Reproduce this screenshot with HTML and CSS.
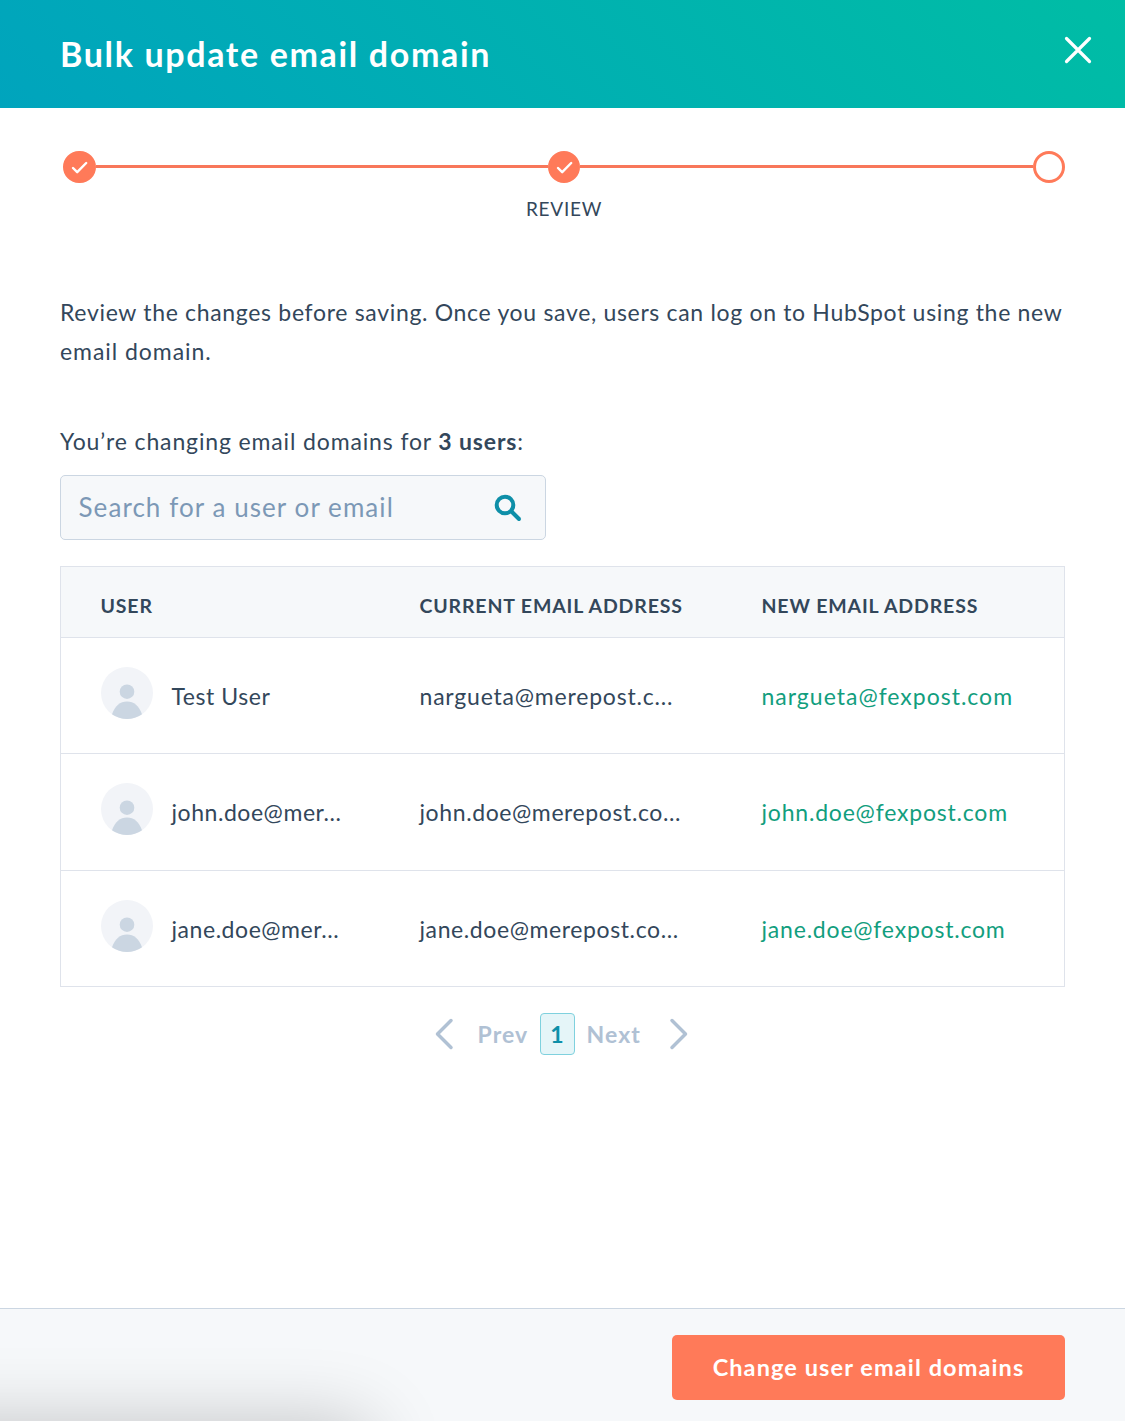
FILE: index.html
```html
<!DOCTYPE html>
<html lang="en">
<head>
  <meta charset="UTF-8" />
  <meta name="viewport" content="width=device-width, initial-scale=1" />
  <title>Bulk update email domain</title>
  <link rel="stylesheet" href="styles.css">
</head>
<body>

<header class="panel-header">
  <h1>Bulk update email domain</h1>
  <button type="button" class="close" aria-label="Close">
    <svg width="28" height="28" viewBox="0 0 28 28"><path d="M2.5 2.5l23 23M25.5 2.5l-23 23" /></svg>
  </button>
</header>

<main>
  <ol class="steps">
    <li class="step done">
      <svg width="18" height="14" viewBox="0 0 18 14"><path d="M3 8l4.200 4.200 9-9.200" /></svg>
    </li>
    <li class="line"></li>
    <li class="step done">
      <svg width="18" height="14" viewBox="0 0 18 14"><path d="M3 8l4.200 4.200 9-9.200" /></svg>
    </li>
    <li class="line"></li>
    <li class="step"></li>
  </ol>
  <div class="step-label"><span>REVIEW</span></div>

  <p class="intro"><span class="intro-first">Review the changes before saving. Once you save, users can log on to HubSpot using the new</span> <span class="intro-last">email domain.</span></p>
  <p class="summary"><span>You’re changing email domains for <strong>3 users</strong>:</span></p>

  <div class="search">
    <span class="placeholder">Search for a user or email</span>
    <svg width="28" height="28" viewBox="0 0 28 28"><circle cx="11" cy="11" r="8.300" /><path d="M17.500 17.500l7.500 7.500" /></svg>
  </div>

  <div class="table">
    <div class="row head">
      <span>User</span>
      <span>Current email address</span>
      <span>New email address</span>
    </div>
    <div class="row">
      <div class="user">
        <svg class="avatar" width="52" height="52" viewBox="0 0 52 52"><circle class="disc" cx="26" cy="26" r="26" /><circle cx="26" cy="24.700" r="7.300" /><path d="M11 47.200C14 39 19 34.500 26 34.500S38 39 41 47.200A26 26 0 0 1 11 47.200z" /></svg>
        <span>Test User</span>
      </div>
      <span class="current wide">nargueta@merepost.c...</span>
      <span class="new wide">nargueta@fexpost.com</span>
    </div>
    <div class="row">
      <div class="user">
        <svg class="avatar" width="52" height="52" viewBox="0 0 52 52"><circle class="disc" cx="26" cy="26" r="26" /><circle cx="26" cy="24.700" r="7.300" /><path d="M11 47.200C14 39 19 34.500 26 34.500S38 39 41 47.200A26 26 0 0 1 11 47.200z" /></svg>
        <span>john.doe@mer...</span>
      </div>
      <span class="current">john.doe@merepost.co...</span>
      <span class="new">john.doe@fexpost.com</span>
    </div>
    <div class="row">
      <div class="user">
        <svg class="avatar" width="52" height="52" viewBox="0 0 52 52"><circle class="disc" cx="26" cy="26" r="26" /><circle cx="26" cy="24.700" r="7.300" /><path d="M11 47.200C14 39 19 34.500 26 34.500S38 39 41 47.200A26 26 0 0 1 11 47.200z" /></svg>
        <span>jane.doe@mer...</span>
      </div>
      <span class="current">jane.doe@merepost.co...</span>
      <span class="new">jane.doe@fexpost.com</span>
    </div>
  </div>

  <nav class="pager">
    <svg width="20" height="32" viewBox="0 0 20 32"><path d="M17 2.500L3.500 16 17 29.500" /></svg>
    <span class="prev">Prev</span>
    <span class="page">1</span>
    <span class="next">Next</span>
    <svg width="20" height="32" viewBox="0 0 20 32"><path d="M3 2.500L16.500 16 3 29.500" /></svg>
  </nav>
</main>

<footer>
  <button type="button" class="primary">Change user email domains</button>
</footer>

</body>
</html>
```
FILE: styles.css
```css
* {
  box-sizing: border-box;
}
body {
  font-family: Lato, "Open Sans", sans-serif;
  font-size: 23px;
  margin: 0;
  height: 1421px;
  display: flex;
  flex-direction: column;
  color: #33475b;
  background: white;
  overflow: hidden;
}
h1, p, ol {
  margin: 0;
  padding: 0;
}
svg {
  display: block;
  fill: none;
  flex: none;
}
button {
  border: none;
  padding: 0;
  font-family: inherit;
  cursor: pointer;
}

/* Header */
.panel-header {
  height: 108px;
  padding: 0 33px 0 60px;
  display: flex;
  align-items: center;
  justify-content: space-between;
  background: linear-gradient(45deg, #00a4bd, #00bda5);
  color: white;
}
h1 {
  margin-bottom: 1px;
  font-size: 34px;
  font-weight: 700;
  letter-spacing: 1.65px;
}
.close {
  background: none;
  margin-bottom: 8px;
}
.close path {
  stroke: white;
  stroke-width: 3.2;
  stroke-linecap: round;
}

main {
  flex: 1;
  padding: 42.5px 60px 0;
}

/* Progress */
.steps {
  display: flex;
  align-items: center;
  list-style: none;
  padding-left: 3px;
}
.step {
  width: 32.5px;
  height: 32.5px;
  border: 3px solid #ff7a59;
  border-radius: 50%;
  display: flex;
  align-items: center;
  justify-content: center;
}
.step.done {
  background: #ff7a59;
}
.step path {
  stroke: white;
  stroke-width: 2.4;
  stroke-linecap: round;
  stroke-linejoin: round;
}
.line {
  flex: 1;
  height: 3px;
  background: #f8775a;
}
.step-label {
  height: 30px;
  margin-top: 11px;
  padding-left: 3px;
  line-height: 30px;
  text-align: center;
  font-size: 19px;
  letter-spacing: 0.75px;
}

.intro {
  margin-top: 68.5px;
  line-height: 39px;
  white-space: nowrap;
}
.intro-first {
  letter-spacing: 0.68px;
}
.intro-last {
  display: block;
  letter-spacing: 0.95px;
}
.summary {
  margin-top: 51.5px;
  line-height: 39px;
  letter-spacing: 0.86px;
}

.search {
  width: 486px;
  height: 65px;
  margin-top: 13.5px;
  padding: 0 23px 0 17.5px;
  display: flex;
  align-items: center;
  justify-content: space-between;
  background: #f6f8fa;
  border: 1.5px solid #cbd6e2;
  border-radius: 5px;
}
.placeholder {
  font-size: 26px;
  letter-spacing: 1.07px;
  color: #7c98b6;
}
.search svg {
  margin-top: 2px;
}
.search circle,
.search path {
  stroke: #0e8fa8;
  stroke-width: 4;
  stroke-linecap: round;
}

/* Users table */
.table {
  margin-top: 26px;
  border: 1.5px solid #dfe3eb;
}
.row {
  height: 116.6px;
  padding: 1px 0 0 39.5px;
  display: grid;
  grid-template-columns: 319px 342px 1fr;
  align-items: center;
  letter-spacing: 0.55px;
  white-space: nowrap;
}
.row + .row {
  border-top: 1.5px solid #dfe3eb;
}
.row.head {
  height: 70px;
  padding-top: 7px;
  background: #f6f8fa;
  font-size: 19.5px;
  font-weight: 700;
  text-transform: uppercase;
  letter-spacing: 0.85px;
}
.user {
  display: flex;
  align-items: center;
  gap: 19px;
}
.avatar {
  margin-bottom: 6px;
  fill: #cbd6e2;
}
.avatar .disc {
  fill: #f2f4f8;
}
.current {
  letter-spacing: 0.6px;
}
.new {
  color: #129e7e;
  letter-spacing: 0.8px;
}
.current.wide {
  letter-spacing: 0.8px;
}
.new.wide {
  letter-spacing: 1px;
}

.pager {
  margin-top: 26px;
  height: 42px;
  padding-right: 3px;
  display: flex;
  align-items: center;
  justify-content: center;
  color: #b0c1d4;
  font-weight: 700;
}
.pager path {
  stroke: #b0c1d4;
  stroke-width: 3.5;
  stroke-linecap: round;
  stroke-linejoin: round;
}
.prev,
.next {
  letter-spacing: 1.1px;
}
.prev {
  width: 50px;
  margin: 0 12px 0 24px;
}
.page {
  width: 35px;
  height: 42px;
  line-height: 40px;
  text-align: center;
  color: #0e8fa8;
  background: #e5f5f8;
  border: 1.5px solid #7fd1de;
  border-radius: 4px;
}
.next {
  width: 53px;
  margin: 0 29px 0 12px;
}

/* Footer */
footer {
  position: relative;
  height: 113px;
  padding: 26px 60px 0;
  display: flex;
  justify-content: flex-end;
  align-items: flex-start;
  background: #f6f8fa;
  border-top: 1.5px solid #cbd6e2;
  overflow: hidden;
}
footer::before {
  content: "";
  position: absolute;
  left: -100px;
  top: 114px;
  width: 470px;
  height: 100px;
  border-radius: 20px;
  box-shadow: 0 0 75px rgba(0, 0, 0, 0.22);
}
.primary {
  width: 393px;
  height: 65px;
  padding-bottom: 2px;
  font-size: 23.5px;
  font-weight: 700;
  letter-spacing: 1.1px;
  color: white;
  background: #ff7a59;
  border-radius: 5px;
}
```
